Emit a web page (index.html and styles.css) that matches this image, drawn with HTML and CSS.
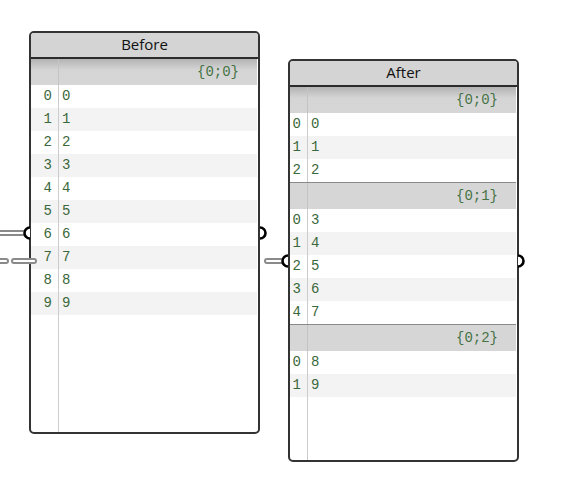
FILE: index.html
```html
<!DOCTYPE html>
<html>
<head>
<meta charset="utf-8">
<link rel="stylesheet" href="styles.css">
</head>
<body>
<div class="canvas">
  <div class="panel before">
    <div class="title">Before</div>
    <div class="body">
      <div class="branch"><span class="idx"></span><span class="path">{0;0}</span></div>
      <div class="row"><span class="idx">0</span><span class="val">0</span></div>
      <div class="row"><span class="idx">1</span><span class="val">1</span></div>
      <div class="row"><span class="idx">2</span><span class="val">2</span></div>
      <div class="row"><span class="idx">3</span><span class="val">3</span></div>
      <div class="row"><span class="idx">4</span><span class="val">4</span></div>
      <div class="row"><span class="idx">5</span><span class="val">5</span></div>
      <div class="row"><span class="idx">6</span><span class="val">6</span></div>
      <div class="row"><span class="idx">7</span><span class="val">7</span></div>
      <div class="row"><span class="idx">8</span><span class="val">8</span></div>
      <div class="row"><span class="idx">9</span><span class="val">9</span></div>
      <div class="fill"><span class="idx"></span></div>
    </div>
  </div>
  <div class="panel after">
    <div class="title">After</div>
    <div class="body">
      <div class="branch"><span class="idx"></span><span class="path">{0;0}</span></div>
      <div class="row"><span class="idx">0</span><span class="val">0</span></div>
      <div class="row"><span class="idx">1</span><span class="val">1</span></div>
      <div class="row"><span class="idx">2</span><span class="val">2</span></div>
      <div class="branch next"><span class="idx"></span><span class="path">{0;1}</span></div>
      <div class="row"><span class="idx">0</span><span class="val">3</span></div>
      <div class="row"><span class="idx">1</span><span class="val">4</span></div>
      <div class="row"><span class="idx">2</span><span class="val">5</span></div>
      <div class="row"><span class="idx">3</span><span class="val">6</span></div>
      <div class="row"><span class="idx">4</span><span class="val">7</span></div>
      <div class="branch next"><span class="idx"></span><span class="path">{0;2}</span></div>
      <div class="row"><span class="idx">0</span><span class="val">8</span></div>
      <div class="row"><span class="idx">1</span><span class="val">9</span></div>
      <div class="fill"><span class="idx"></span></div>
    </div>
  </div>
  <svg class="wires" width="568" height="500" viewBox="0 0 568 500">
    <g stroke-linecap="round" fill="none">
      <line x1="-6" y1="233" x2="23" y2="233" stroke="#8a8a8a" stroke-width="6"/>
      <line x1="-6" y1="233" x2="23" y2="233" stroke="#ffffff" stroke-width="2.2"/>
      <line x1="-6" y1="261" x2="6" y2="261" stroke="#8a8a8a" stroke-width="6"/>
      <line x1="-6" y1="261" x2="6" y2="261" stroke="#ffffff" stroke-width="2.2"/>
      <line x1="14" y1="261" x2="34" y2="261" stroke="#8a8a8a" stroke-width="6"/>
      <line x1="14" y1="261" x2="34" y2="261" stroke="#ffffff" stroke-width="2.2"/>
      <line x1="267" y1="261" x2="283" y2="261" stroke="#8a8a8a" stroke-width="6"/>
      <line x1="267" y1="261" x2="283" y2="261" stroke="#ffffff" stroke-width="2.2"/>
    </g>
    <g stroke="#000" stroke-width="2.6" fill="#fff">
      <path d="M30 227.5 A5.5 5.5 0 0 0 30 238.5"/>
      <path d="M260 227.5 A5.5 5.5 0 0 1 260 238.5"/>
      <path d="M288 255.5 A5.5 5.5 0 0 0 288 266.5"/>
      <path d="M518 255.5 A5.5 5.5 0 0 1 518 266.5"/>
    </g>
  </svg>
</div>
</body>
</html>
```
FILE: styles.css
```css
html, body {
  margin: 0;
  background: #ffffff;
}

.canvas {
  position: relative;
  width: 568px;
  height: 500px;
  box-sizing: border-box;
  padding: 31px 0 0 29px;
  display: flex;
  align-items: flex-start;
  gap: 28px;
  overflow: hidden;
}

.panel {
  width: 231px;
  height: 403px;
  box-sizing: border-box;
  border: 2px solid #333333;
  border-radius: 5px;
  background: #ffffff;
  display: flex;
  flex-direction: column;
  overflow: hidden;
  --idx: 28px;
}

.after {
  margin-top: 28px;
  --idx: 18px;
}

.title {
  height: 24px;
  line-height: 23px;
  background: #d4d4d4;
  border-bottom: 2px solid #2b2b2b;
  text-align: center;
  font-family: "Open Sans", "Noto Sans", sans-serif;
  font-size: 15px;
  color: #111111;
}

.body {
  flex: 1;
  display: flex;
  flex-direction: column;
  padding-right: 1px;
  font-family: "Liberation Mono", "DejaVu Sans Mono", monospace;
  font-size: 14px;
  color: #3a683a;
}

.branch,
.row,
.fill {
  display: flex;
}

.idx {
  width: var(--idx);
  flex: none;
  box-sizing: border-box;
  border-right: 1px solid #cccccc;
  text-align: right;
  padding-right: 6px;
}

.branch {
  height: 26px;
  line-height: 26px;
  background: linear-gradient(#b3b3b3, #d5d5d5 11px, #d6d6d6);
}

.branch .idx {
  border-right-color: #c4c4c4;
}

.branch.next {
  border-top: 1px solid #8a8a8a;
  background: #d6d6d6;
}

.path {
  flex: 1;
  text-align: right;
  padding-right: 18px;
  color: #447244;
}

.row {
  height: 23px;
  line-height: 23px;
  background: #ffffff;
}

.row:nth-child(odd) {
  background: #f3f3f3;
}

.val {
  padding-left: 3px;
}

.fill {
  flex: 1;
}

.wires {
  position: absolute;
  left: 0;
  top: 0;
  pointer-events: none;
}
```
